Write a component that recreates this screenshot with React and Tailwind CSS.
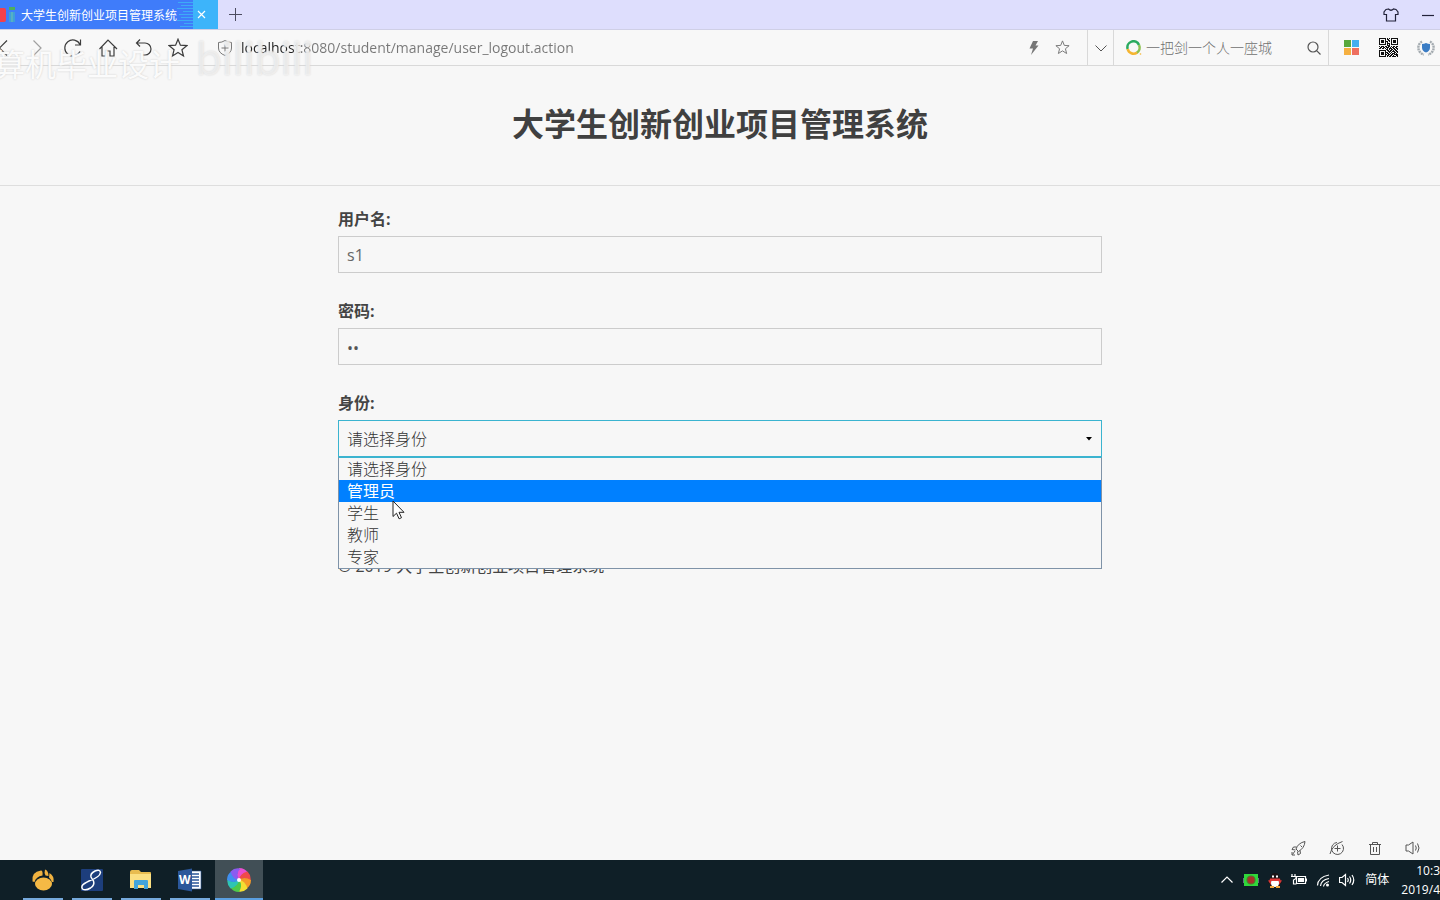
import { useState } from "react";

const SYSTEM_NAME = "大学生创新创业项目管理系统";

const roles = ["请选择身份", "管理员", "学生", "教师", "专家"];

function Icon({ children, size = 20, box = "0 0 20 20", className = "", stroke = 1.2 }) {
  return (
    <svg
      width={size}
      height={size}
      viewBox={box}
      fill="none"
      stroke="currentColor"
      strokeWidth={stroke}
      className={className}
      aria-hidden="true"
    >
      {children}
    </svg>
  );
}

const STAR = "M10 1.2 12.4 7.2 18.8 7.6 13.9 11.7 15.5 18 10 14.5 4.5 18 6.1 11.7 1.2 7.6 7.6 7.2Z";

function TabBar() {
  return (
    <div className="flex h-[30px] items-start border-b border-[#cfcfe6] bg-[#dedefd]">
      <div className="flex h-[29px] w-[218px] items-center bg-[#3f7cfa] text-white">
        <svg width="16" height="16" viewBox="0 0 16 16" className="shrink-0" aria-hidden="true">
          <path d="M0 1h4q2 0 2 2v10q0 2-2 2H0z" fill="#f4404c" />
          <path d="M9 0h6v3H9z" fill="#4fae5a" />
          <path d="M9 5h6v10H9z" fill="#3f9fd8" />
          <path d="M12 5v10" stroke="#6fc0b0" />
        </svg>
        <span className="ml-[5px] whitespace-nowrap pt-0.5 text-xs">{SYSTEM_NAME}</span>
        <div className="flex h-full flex-1 justify-end">
          <svg width="16" height="29" viewBox="0 0 16 29" className="shrink-0" aria-hidden="true">
            <path
              d="M1 2.500h15M4 5.500h12M0 8.500h16M6 11.500h10M2 14.500h14M4 17.500h12M0 20.500h16M7 23.500h9M3 26.500h13"
              stroke="#3dabf6"
            />
          </svg>
          <button type="button" aria-label="关闭标签页" className="flex h-full w-[25px] items-center justify-start bg-[#3db4fa] pl-1">
            <svg width="9" height="9" viewBox="0 0 9 9" stroke="#fff" strokeWidth="1.2">
              <path d="M1 1l7 7M8 1 1 8" />
            </svg>
          </button>
        </div>
      </div>
      <button type="button" aria-label="新建标签页" className="flex h-[29px] w-[35px] items-center justify-center text-[#4c4c60]">
        <Icon size={13} box="0 0 13 13" stroke={1}>
          <path d="M6.500 0v13M0 6.500h13" />
        </Icon>
      </button>
      <div className="ml-auto flex h-[29px] items-center overflow-hidden text-[#22223a]">
        <button type="button" aria-label="皮肤" className="flex w-[37px] justify-center">
          <Icon size={16} box="0 0 16 16">
            <path d="M5.500 2 3 2.500 1 5v2.500h2.500v6.500h9V7.500H15V5l-2-2.500L10.500 2Q8 4.500 5.500 2z" />
          </Icon>
        </button>
        <button type="button" aria-label="最小化" className="-mr-[6px] flex w-[37px] justify-center">
          <Icon size={12} box="0 0 12 12">
            <path d="M0 6.500h12" />
          </Icon>
        </button>
      </div>
    </div>
  );
}

function NavButton({ label, color = "text-[#3c3c3c]", children }) {
  return (
    <button type="button" aria-label={label} className={`flex w-[35px] shrink-0 justify-center ${color}`}>
      <Icon>{children}</Icon>
    </button>
  );
}

function QrIcon() {
  const rows = [
    "1111111010101111111",
    "1000001011001000001",
    "1011101001101011101",
    "1011101110101011101",
    "1011101010001011101",
    "1000001011101000001",
    "1111111010101111111",
    "0000000011100000000",
    "1011101101101011011",
    "0110110111010110110",
    "1101101010111011011",
    "0000000110101101101",
    "1111111011011010110",
    "1000001001110111011",
    "1011101110101001101",
    "1011101011010111010",
    "1011101101101101111",
    "1000001011011010011",
    "1111111010110111101",
  ];
  return (
    <svg width="19" height="19" viewBox="0 0 19 19" fill="#111" shapeRendering="crispEdges" aria-hidden="true">
      {rows.map((row, y) =>
        row.split("").map((c, x) => (c === "1" ? <rect key={`${x}-${y}`} x={x} y={y} width="1" height="1" /> : null))
      )}
    </svg>
  );
}

function Toolbar() {
  const [url, setUrl] = useState("localhost:8080/student/manage/user_logout.action");
  return (
    <div className="flex h-9 items-center overflow-hidden border-b border-[#d9d9d9] bg-[#f8f8f8]">
      <nav className="-ml-[15px] flex shrink-0">
        <NavButton label="后退">
          <path d="M14 2.500 6.500 10l7.500 7.500" />
        </NavButton>
        <NavButton label="前进" color="text-[#a0a0a0]">
          <path d="M5.500 2.500 13 10l-7.500 7.500" />
        </NavButton>
        <NavButton label="刷新">
          <path d="M17 13.500A8 8 0 1 1 17 6.500M17.500 1.500V7h-5.500" />
        </NavButton>
        <NavButton label="主页">
          <path d="M1.500 11 10 2l9 9M4 9v9h4v-5h4v5h4V9" />
        </NavButton>
        <NavButton label="恢复">
          <path d="M7 1.500 3.500 5 7 8.500M3.500 5H12a6 6 0 0 1 0 12H9" />
        </NavButton>
        <NavButton label="收藏">
          <path d={STAR} />
        </NavButton>
      </nav>
      <div className="ml-[22px] flex min-w-0 flex-1 items-center">
        <Icon size={16} box="0 0 16 16" className="shrink-0 text-[#777]" stroke={1}>
          <path d="M8 .5Q5 2.500 1.500 2.500V8q0 5 6.500 7.500Q14.500 13 14.500 8V2.500Q11 2.500 8 .5zM8 4.500v7M4.500 8h7" />
        </Icon>
        <input
          type="text"
          aria-label="地址"
          value={url}
          onChange={(e) => setUrl(e.target.value)}
          className="ml-2 w-full min-w-0 bg-[linear-gradient(90deg,#222_60px,#777_60px)] bg-clip-text text-sm text-transparent caret-[#333] outline-none"
        />
      </div>
      <button type="button" aria-label="极速模式" className="flex w-7 shrink-0 justify-center text-[#777]">
        <svg width="10" height="14" viewBox="0 0 10 14" fill="currentColor">
          <path d="M4 0h5L6.500 4.500H9.500L2 14l2-6.500H.5z" />
        </svg>
      </button>
      <button type="button" aria-label="添加收藏" className="mr-[11px] flex w-7 shrink-0 justify-center text-[#777]">
        <Icon size={15} stroke={1.3}>
          <path d={STAR} />
        </Icon>
      </button>
      <button type="button" aria-label="展开" className="flex h-full w-[27px] shrink-0 items-center justify-center border-x border-[#d9d9d9] text-[#555]">
        <Icon size={12} box="0 0 12 12" stroke={1}>
          <path d="M.5 3.500 6 9l5.500-5.500" />
        </Icon>
      </button>
      <form className="flex h-full w-[215px] shrink-0 items-center border-r border-[#d9d9d9] pl-3" onSubmit={(e) => e.preventDefault()}>
        <svg width="16" height="16" viewBox="0 0 16 16" fill="none" strokeWidth="2.600" className="shrink-0">
          <path d="M1.700 9A6 6 0 0 1 13 5" stroke="#2bab60" />
          <path d="M13 5a6 6 0 0 1-2.300 7.800" stroke="#8cc152" />
          <path d="M11 12.600A6 6 0 0 1 1.700 9" stroke="#f5b532" />
          <circle cx="14.500" cy="14" r=".8" fill="#f5b532" stroke="none" />
        </svg>
        <input
          type="search"
          aria-label="搜索"
          placeholder="一把剑一个人一座城"
          className="ml-1 w-full min-w-0 bg-transparent text-sm font-light text-[#888] outline-none placeholder:text-[#707070]"
        />
        <button type="submit" aria-label="搜索" className="flex w-7 shrink-0 justify-center text-[#555]">
          <Icon size={14} box="0 0 14 14">
            <path d="M11 6A5 5 0 1 1 1 6a5 5 0 0 1 10 0zM9.600 9.600 13.500 13.500" />
          </Icon>
        </button>
      </form>
      <div className="-mr-1 ml-1 flex shrink-0 items-center">
        <button type="button" aria-label="应用" className="flex w-[37px] justify-center">
          <svg width="15" height="15" viewBox="0 0 15 15">
            <path d="M0 0h7v7H0z" fill="#58a83c" />
            <path d="M8 0h7v7H8z" fill="#45aef0" />
            <path d="M0 8h7v7H0z" fill="#f5b041" />
            <path d="M8 8h7v7H8z" fill="#ee6f60" />
          </svg>
        </button>
        <button type="button" aria-label="二维码" className="flex w-[37px] justify-center">
          <QrIcon />
        </button>
        <button type="button" aria-label="安全" className="flex w-[37px] justify-center">
          <svg width="18" height="16" viewBox="0 0 18 16" fill="none">
            <path d="M5 1.500A7 7 0 0 0 7 14.500M13 1.500A7 7 0 0 1 11 14.500" stroke="#a4abb0" strokeWidth="2.400" strokeDasharray="2 .7" />
            <path d="M9 3q2 1 4 1v3.500Q13 11 9 12.500 5 11 5 7.500V4q2 0 4-1z" fill="#3a7cc4" />
          </svg>
        </button>
      </div>
    </div>
  );
}

function Watermark() {
  return (
    <div className="pointer-events-none absolute -left-1.5 top-7 flex items-center whitespace-nowrap">
      <span className="mt-3 text-[31px] leading-10 text-white/90 [text-shadow:0_0_2px_#c8c8c8]">算机毕业设计</span>
      <span className="ml-4 font-[Lato] text-[46px] leading-[60px] text-white/50 [text-shadow:0_0_2px_#d4d4d4]">
        bilibili
      </span>
    </div>
  );
}

function Field({ id, label, children }) {
  return (
    <div className="mb-[25px]">
      <label htmlFor={id} className="mb-[3px] block font-bold leading-[27px] text-[#444]">
        {label}:
      </label>
      {children}
    </div>
  );
}

function LoginForm() {
  const [data, setData] = useState({ username: "s1", password: "s1", role: roles[0] });
  const [active, setActive] = useState("管理员");
  const onChangeHandler = (e) => {
    setData({ ...data, [e.target.name]: e.target.value });
  };
  return (
    <form className="pt-5" onSubmit={(e) => e.preventDefault()}>
      <Field id="username" label="用户名">
        <input
          id="username"
          name="username"
          type="text"
          value={data.username}
          onChange={onChangeHandler}
          className="block h-[37px] w-full border border-[#ccc] px-2 text-[#666] outline-none"
        />
      </Field>
      <Field id="password" label="密码">
        <input
          id="password"
          name="password"
          type="password"
          value={data.password}
          onChange={onChangeHandler}
          className="block h-[37px] w-full border border-[#ccc] px-2 pt-0.5 text-[#555] outline-none"
        />
      </Field>
      <Field id="role" label="身份">
        <div className="relative">
          <select
            id="role"
            name="role"
            value={data.role}
            onChange={onChangeHandler}
            className="block h-[37px] w-full appearance-none border border-[#3bb4d0] px-2 font-light text-[#333] outline-none"
          >
            {roles.map((role) => (
              <option key={role}>{role}</option>
            ))}
          </select>
          <svg width="6" height="4" viewBox="0 0 6 4" className="pointer-events-none absolute right-[10px] top-[17px]">
            <path d="M0 0h6L3 3.500z" fill="#000" />
          </svg>
          <ul role="listbox" aria-label="身份" className="absolute inset-x-0 top-full z-10 border border-[#7f93a8] border-t-[#3bb4d0] bg-[#f7f7f7]">
            {roles.map((role) => (
              <li
                key={role}
                role="option"
                aria-selected={role === active}
                onMouseEnter={() => setActive(role)}
                className={`px-2 leading-[22px] ${role === active ? "bg-[#0080ff] text-white" : "font-light text-[#333]"}`}
              >
                {role}
              </li>
            ))}
          </ul>
          <svg width="13" height="20" viewBox="0 0 13 20" className="pointer-events-none absolute left-[54px] top-20 z-20">
            <path d="M1 1v15.500l3.500-3.300 2.600 5.600 2.400-1.100L7 12.300h5z" fill="#fff" stroke="#222" />
          </svg>
        </div>
      </Field>
    </form>
  );
}

function StatusBar() {
  return (
    <div className="flex h-6 items-center justify-end pr-2 text-[#555]">
      <button type="button" aria-label="加速" className="flex w-[38px] justify-center">
        <Icon size={16} box="0 0 16 16" stroke={1}>
          <path d="M5 9Q7 3 14 1.500 13.500 8 7.500 11.500zM5.500 7H2.500L1 9.500l3.500.5M9 10.500l.5 3L7 15l-.5-3.500M4 11l-2.500 3.500M1 12v3h3M9.500 5.500l1.500 1.500" />
        </Icon>
      </button>
      <button type="button" aria-label="浏览器医生" className="flex w-[38px] justify-center">
        <Icon size={16} box="0 0 16 16" stroke={1}>
          <path d="M13 4.500A6 6 0 1 1 8 2.500M1 14Q3 5 13.500 1.500M8.500 5.500v6M5.500 8.500h6" />
        </Icon>
      </button>
      <button type="button" aria-label="清理" className="flex w-[38px] justify-center">
        <Icon size={14} box="0 0 14 14" stroke={1}>
          <path d="M1 3.500h12M4.500 3.500v-2h5v2M2.500 3.500v10h9v-10M5.500 6v5M8.500 6v5" />
        </Icon>
      </button>
      <button type="button" aria-label="静音" className="flex w-[38px] justify-center">
        <Icon size={16} box="0 0 16 16" stroke={1}>
          <path d="M1 5v6h2.500L8 14V2L3.500 5zM10.500 5.500q1.500 2.500 0 5M12.500 3.500q3 4.500 0 9" />
        </Icon>
      </button>
    </div>
  );
}

const apps = [
  {
    name: "Navicat",
    icon: (
      <>
        <ellipse cx="12.500" cy="16" rx="8.500" ry="6.500" fill="#f5b945" />
        <path d="M1.500 13.500Q0 4 10 2.500q2 0 1.500 5Q5 8.500 3.500 14zM14 1.500q3.500 1 3.500 6.500l-3-.5q-1.500-3-.5-6zM18.500 5Q23.500 8 22.500 14h-1.500q-1-3-3-4.500z" fill="#f0b240" />
      </>
    ),
  },
  {
    name: "MyEclipse",
    icon: (
      <>
        <rect x="1" y="1" width="22" height="22" rx="1" fill="#1d3e7c" />
        <path d="M9 13Q20 9 20.500 4.500 20 1 15 3q-5 2.500-4 6 1 2 2.500 4 1.500 4-3 7-5 3-8 1-2-3 2-5.500Q7 14 9 13z" fill="none" stroke="#fff" strokeWidth="1.500" />
      </>
    ),
  },
  {
    name: "资源管理器",
    icon: (
      <>
        <path d="M1 4q0-2 2-2h7l2 2h9q1 0 1 1v15H1z" fill="#e8bc50" />
        <path d="M1 6h21v14H1z" fill="#fbdf82" />
        <path d="M5 21v-8q0-1 1-1h12q1 0 1 1v8h-4v-4H9v4z" fill="#42a4dc" />
      </>
    ),
  },
  {
    name: "Word",
    icon: (
      <>
        <path d="M12 3h11v18H12z" fill="#fff" stroke="#2b579a" strokeWidth=".6" />
        <path d="M14 6h7M14 9h7M14 12h7M14 15h7M14 18h7" stroke="#2b579a" strokeWidth="1.400" />
        <path d="M0 3 14 .5v23L0 21z" fill="#2b579a" />
        <text x="1" y="16" fontSize="12" fontWeight="bold" fill="#fff">W</text>
      </>
    ),
  },
  {
    name: "浏览器",
    active: true,
    icon: (
      <>
        {["#e94fd0", "#f04a4a", "#f59a28", "#f4de32", "#4fc94a", "#2ec5b4", "#3f8ff0", "#8a5cf0"].map((color, i) => (
          <path key={color} d="M12 12Q8 7 12 0q6 0 9 5-6-1-9 7z" fill={color} transform={`rotate(${i * 45} 12 12)`} />
        ))}
        <circle cx="12" cy="12" r="2" fill="#fff" />
      </>
    ),
  },
];

function Tray({ label, children }) {
  return (
    <button type="button" aria-label={label} className="flex w-6 justify-center">
      <Icon size={16} box="0 0 16 16">{children}</Icon>
    </button>
  );
}

function Taskbar() {
  return (
    <div className="flex h-10 items-stretch overflow-hidden bg-[#0f1f27] pl-[19px] text-white">
      <div className="flex gap-px">
        {apps.map((app) => (
          <button
            key={app.name}
            type="button"
            aria-label={app.name}
            className={`flex w-12 flex-col items-center justify-between pt-2 ${app.active ? "bg-[#414f56]" : ""}`}
          >
            <svg width="24" height="24" viewBox="0 0 24 24" aria-hidden="true">
              {app.icon}
            </svg>
            <span className={`h-0.5 ${app.active ? "w-full bg-[#5a9fe0]" : "w-10 bg-[#76a9dc]"}`} />
          </button>
        ))}
      </div>
      <div className="ml-auto flex items-center">
        <Tray label="显示隐藏的图标">
          <path d="M2.500 10.500 8 5l5.500 5.500" />
        </Tray>
        <Tray label="录屏">
          <path d="M1 2h14v12H1z" fill="#2fd83a" stroke="none" />
          <path d="M0 6v5M16 6v5" stroke="#9ab" />
          <circle cx="8" cy="8" r="4" fill="#a8322a" stroke="#5a7030" />
        </Tray>
        <Tray label="QQ">
          <g stroke="none">
            <path d="M4 5q0-4 4-4t4 4l3 6-2 1v2H3v-2l-2-1z" fill="#1c1416" />
            <ellipse cx="8" cy="11" rx="4" ry="4" fill="#fff" />
            <path d="M3 6.500h10L13.500 9h-11z" fill="#e23838" />
            <path d="M5 4.500h2M9 4.500h2" stroke="#fff" strokeWidth="2" />
            <path d="M1 8.500 4 8v5zM15 8.500 12 8v5z" fill="#d93636" />
            <path d="M3 14h4v2H3zM9 14h4v2H9z" fill="#f0a43a" />
          </g>
        </Tray>
        <Tray label="电源">
          <path d="M5.500 4.500h9v7h-9zM15.500 6.500v3M1 2v3M4 2v3M0 4.500h5v2L2.500 8v4h3" />
          <path d="M7 6h6v4H7z" fill="currentColor" stroke="none" />
        </Tray>
        <Tray label="网络">
          <path d="M2.500 13.500Q3 5 14 3M5.500 14Q6 8 14 6.500M8.500 14.500Q9 11 14 9.500" />
          <circle cx="12.500" cy="13" r="1.500" fill="currentColor" stroke="none" />
        </Tray>
        <Tray label="音量">
          <path d="M.5 5.500v5h2.500L6.500 13.500v-11L3 5.500zM8.500 6q1.500 2 0 4M10.500 4.500q2.500 3.500 0 7M13 3q3.500 5 0 10" />
        </Tray>
        <span className="ml-1.5 text-xs">简体</span>
        <div className="ml-3 text-right text-xs leading-[19px]">
          <div>10:3</div>
          <div>2019/4</div>
        </div>
      </div>
    </div>
  );
}

export default function App() {
  return (
    <div className="relative flex min-h-screen flex-col overflow-hidden bg-[#f7f7f7] font-['Open_Sans','Noto_Sans_CJK_SC',sans-serif]">
      <TabBar />
      <Toolbar />
      <Watermark />
      <main className="flex-1">
        <header className="border-b border-[#dedede] pb-[35px] pt-8">
          <h1 className="text-center text-[32px] font-bold leading-[52px] text-[#404040]">{SYSTEM_NAME}</h1>
        </header>
        <div className="mx-auto w-full max-w-[764px]">
          <LoginForm />
          <footer className="pt-[72px] leading-6 text-[#444]">© 2019 {SYSTEM_NAME}</footer>
        </div>
      </main>
      <StatusBar />
      <Taskbar />
    </div>
  );
}
